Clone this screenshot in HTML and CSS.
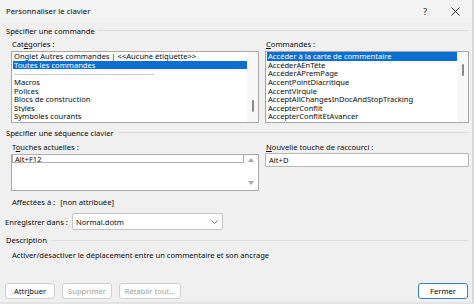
FILE: index.html
```html
<!DOCTYPE html>
<html lang="fr">
<head>
    <meta charset="UTF-8">
    <title>Personnaliser le clavier</title>
    <link rel="stylesheet" href="styles.css">
</head>
<body>
    <div class="dialog">
        <div class="titlebar">
            <span class="title">Personnaliser le clavier</span>
            <span class="title-btns">
                <span class="help">?</span>
                <span class="close">
                    <svg width="9" height="9" viewBox="0 0 9 9"><path d="M0.5 0.5L8.5 8.5M8.5 0.5L0.5 8.5" stroke="#222" stroke-width="0.9" fill="none"/></svg>
                </span>
            </span>
        </div>

        <div class="group-head"><span>Spécifier une commande</span></div>
        <div class="pair">
            <div class="field">
                <div class="lbl">Cat<u>é</u>gories :</div>
                <div class="listbox">
                    <ul class="items">
                        <li>Onglet Autres commandes | &lt;&lt;Aucune étiquette&gt;&gt;</li>
                        <li class="sel">Toutes les commandes</li>
                        <li class="dashes">--------------------------------------------------------</li>
                        <li>Macros</li>
                        <li>Polices</li>
                        <li>Blocs de construction</li>
                        <li>Styles</li>
                        <li>Symboles courants</li>
                    </ul>
                    <div class="vscroll"><span class="thumb thumb-low"></span></div>
                </div>
            </div>
            <div class="field">
                <div class="lbl"><u>C</u>ommandes :</div>
                <div class="listbox">
                    <ul class="items">
                        <li class="sel">Accéder à la carte de commentaire</li>
                        <li>AccéderÀEnTête</li>
                        <li>AccéderÀPremPage</li>
                        <li>AccentPointDiacritique</li>
                        <li>AccentVirgule</li>
                        <li>AcceptAllChangesInDocAndStopTracking</li>
                        <li>AccepterConflit</li>
                        <li>AccepterConflitEtAvancer</li>
                    </ul>
                    <div class="vscroll"><span class="thumb thumb-high"></span></div>
                </div>
            </div>
        </div>

        <div class="group-head second"><span>Spécifier une séquence clavier</span></div>
        <div class="pair">
            <div class="field">
                <div class="lbl">T<u>o</u>uches actuelles :</div>
                <div class="keysbox">
                    <div class="keys">
                        <div class="key-row">Alt+F12</div>
                    </div>
                    <div class="spin">
                        <span class="arrow up"></span>
                        <span class="arrow down"></span>
                    </div>
                </div>
            </div>
            <div class="field">
                <div class="lbl"><u>N</u>ouvelle touche de raccourci :</div>
                <div class="textbox">Alt+D</div>
            </div>
        </div>

        <div class="assigned">
            <span>Affectées à :</span>
            <span>[non attribuée]</span>
        </div>

        <div class="save-row">
            <span class="save-lbl">Enre<u>g</u>istrer dans :</span>
            <div class="combo">
                <span>Normal.dotm</span>
                <svg width="7" height="4" viewBox="0 0 7 4"><path d="M0.5 0.5L3.5 3.3L6.5 0.5" stroke="#555" stroke-width="0.8" fill="none"/></svg>
            </div>
        </div>

        <div class="group-head desc-head"><span>Description</span></div>
        <div class="desc">Activer/désactiver le déplacement entre un commentaire et son ancrage</div>

        <div class="buttons">
            <button class="btn">Attr<u>i</u>buer</button>
            <button class="btn" disabled>Supprimer</button>
            <button class="btn wide" disabled>Rétablir tout...</button>
            <button class="btn default">Fermer</button>
        </div>
    </div>
</body>
</html>
```

FILE: styles.css
```css
* {
    box-sizing: border-box;
}
body {
    margin: 0;
    background: #ffffff;
}
.dialog {
    width: 474px;
    height: 304px;
    background: #f0f0f0;
    display: flex;
    flex-direction: column;
    font-family: "Noto Sans", "Open Sans", sans-serif;
    font-size: 7.6px;
    color: #0a0a0a;
    border-right: 2px solid #d8d8d8;
    border-bottom: 2px solid #e4e4e4;
}
u {
    text-decoration-thickness: 0.6px;
    text-underline-offset: 1px;
}
.titlebar {
    height: 22px;
    display: flex;
    align-items: center;
    justify-content: space-between;
    padding: 0 6px;
    background: #f3f3f3;
    font-size: 7.8px;
}
.title-btns {
    display: flex;
    align-items: center;
    gap: 24px;
    padding-right: 6px;
}
.help {
    font-size: 8.5px;
    color: #222;
}
.close {
    display: flex;
}
.group-head {
    height: 17px;
    display: flex;
    align-items: center;
    padding: 0 4px 0 6px;
    gap: 4px;
}
.group-head::after {
    content: "";
    flex: 1;
    height: 1px;
    background: #dcdcdc;
}
.group-head.second {
    height: 19px;
}
.pair {
    display: grid;
    grid-template-columns: 248px 204px;
    column-gap: 6px;
    padding-left: 11px;
}
.lbl {
    height: 10px;
    line-height: 10px;
    padding-left: 1px;
    margin-bottom: 2px;
}
.listbox {
    height: 72px;
    display: flex;
    background: #fff;
    border: 1px solid #a8a8a8;
}
.items {
    flex: 1;
    list-style: none;
    margin: 0;
    padding: 0 0 0 1px;
    overflow: hidden;
}
.items li {
    height: 8.65px;
    line-height: 8.65px;
    padding-left: 1px;
    white-space: nowrap;
    overflow: hidden;
}
.items li.sel {
    background: #0a6fd1;
    color: #fff;
}
.items li.dashes {
    color: #8a8a8a;
    letter-spacing: 0.05px;
}
.vscroll {
    width: 11px;
    background: #f7f7f7;
    display: flex;
    flex-direction: column;
    align-items: center;
}
.thumb {
    width: 2px;
    height: 12px;
    background: #8a8a8a;
    border-radius: 1px;
}
.thumb-low {
    margin-top: 48px;
}
.thumb-high {
    margin-top: 12px;
}
.keysbox {
    height: 37px;
    display: flex;
    background: #fff;
    border: 1px solid #a8a8a8;
}
.keys {
    flex: 1;
}
.key-row {
    height: 9px;
    line-height: 8px;
    border: 1px solid #b0b0b0;
    padding-left: 2px;
    margin-top: -1px;
}
.spin {
    width: 14px;
    display: flex;
    flex-direction: column;
    justify-content: space-between;
    align-items: center;
    padding: 3px 0 5px;
}
.arrow {
    width: 0;
    height: 0;
    border-left: 3px solid transparent;
    border-right: 3px solid transparent;
}
.arrow.up {
    border-bottom: 4px solid #a8a8a8;
}
.arrow.down {
    border-top: 4px solid #a8a8a8;
}
.textbox {
    height: 14px;
    line-height: 12px;
    background: #fff;
    border: 1px solid #b8b8b8;
    padding-left: 3px;
    margin-top: -1px;
}
.assigned {
    height: 16px;
    margin-top: 3px;
    display: flex;
    align-items: center;
    gap: 5px;
    padding-left: 12px;
}
.save-row {
    height: 17px;
    margin-top: 3px;
    display: flex;
    align-items: center;
    padding-left: 5px;
}
.save-lbl {
    width: 67px;
}
.combo {
    width: 151px;
    height: 17px;
    display: flex;
    align-items: center;
    justify-content: space-between;
    padding: 0 4px 0 3px;
    background: #fff;
    border: 1px solid #c4c4c4;
    border-radius: 2px;
}
.desc-head {
    height: 20px;
}
.desc {
    height: 10px;
    line-height: 10px;
    padding-left: 12px;
}
.buttons {
    margin-top: auto;
    margin-bottom: 3px;
    display: flex;
    gap: 7px;
    padding: 0 4px 0 5px;
}
.btn {
    width: 50px;
    height: 16px;
    padding: 0;
    font-family: inherit;
    font-size: 7.6px;
    color: #0a0a0a;
    background: #fdfdfd;
    border: 1px solid #cfcfcf;
    border-radius: 3px;
}
.btn:disabled {
    color: #a3a3a3;
}
.btn.wide {
    width: 62px;
}
.btn.default {
    margin-left: auto;
    border: 1.5px solid #3a7fc8;
}
```
